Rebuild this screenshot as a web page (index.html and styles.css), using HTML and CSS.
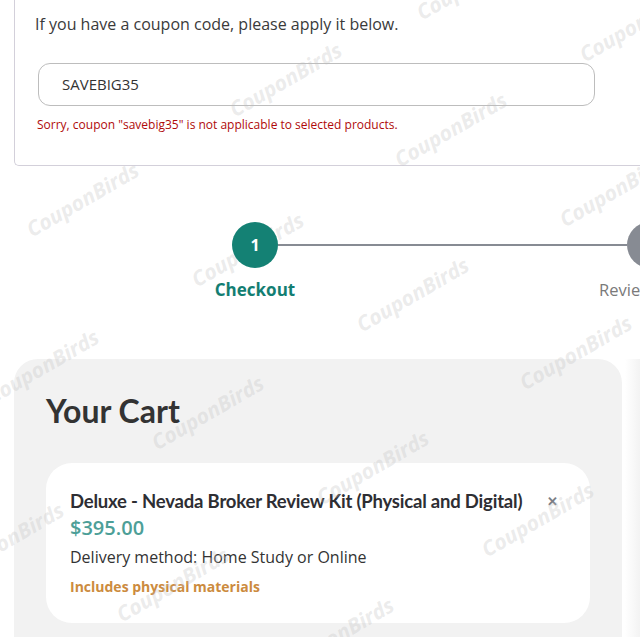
FILE: index.html
```html
<!DOCTYPE html>
<html lang="en">
<head>
<meta charset="utf-8">
<title>Checkout</title>
<link rel="stylesheet" href="styles.css">
</head>
<body>
<div class="page">
  <section class="coupon-card">
    <p class="coupon-intro">If you have a coupon code, please apply it below.</p>
    <div class="coupon-input">SAVEBIG35</div>
    <p class="coupon-error">Sorry, coupon "savebig35" is not applicable to selected products.</p>
  </section>

  <div class="stepper">
    <div class="step step-active">
      <div class="step-circle">1</div>
      <div class="step-label">Checkout</div>
    </div>
    <div class="step-line"></div>
    <div class="step step-next">
      <div class="step-circle">2</div>
      <div class="step-label">Review</div>
    </div>
  </div>

  <div class="cart-row">
    <section class="cart-panel">
      <h2 class="cart-title">Your Cart</h2>
      <div class="cart-item">
        <div class="item-head">
          <h3 class="item-name">Deluxe - Nevada Broker Review Kit (Physical and Digital)</h3>
          <span class="item-remove">&#x2715;</span>
        </div>
        <div class="item-price">$395.00</div>
        <div class="item-delivery">Delivery method: Home Study or Online</div>
        <div class="item-note">Includes physical materials</div>
      </div>
    </section>
    <div class="side-shadow"></div>
  </div>
</div>

<div class="watermarks" aria-hidden="true">
  <span class="wm" style="left:425px;top:-2px">CouponBirds</span>
  <span class="wm" style="left:238px;top:95px">CouponBirds</span>
  <span class="wm" style="left:403px;top:145px">CouponBirds</span>
  <span class="wm" style="left:588px;top:40px">CouponBirds</span>
  <span class="wm" style="left:35px;top:215px">CouponBirds</span>
  <span class="wm" style="left:200px;top:265px">CouponBirds</span>
  <span class="wm" style="left:365px;top:310px">CouponBirds</span>
  <span class="wm" style="left:568px;top:205px">CouponBirds</span>
  <span class="wm" style="left:-5px;top:382px">CouponBirds</span>
  <span class="wm" style="left:160px;top:428px">CouponBirds</span>
  <span class="wm" style="left:325px;top:483px">CouponBirds</span>
  <span class="wm" style="left:528px;top:368px">CouponBirds</span>
  <span class="wm" style="left:-40px;top:555px">CouponBirds</span>
  <span class="wm" style="left:125px;top:600px">CouponBirds</span>
  <span class="wm" style="left:490px;top:535px">CouponBirds</span>
  <span class="wm" style="left:290px;top:650px">CouponBirds</span>
</div>
</body>
</html>
```

FILE: styles.css
```css
html, body {
  margin: 0;
  padding: 0;
  background: #ffffff;
  overflow: hidden;
}

body {
  width: 640px;
  height: 637px;
  position: relative;
  font-family: "Open Sans", "Noto Sans", sans-serif;
  color: #333333;
}

.page {
  width: 640px;
}

p { margin: 0; }

/* Coupon card */
.coupon-card {
  margin-left: 14px;
  width: 700px;
  border: 1px solid #d3d0da;
  border-top: none;
  border-right: none;
  border-radius: 0 0 0 5px;
  padding: 12px 0 32px 20px;
  box-sizing: border-box;
}

.coupon-intro {
  font-size: 16px;
  line-height: 24px;
  color: #3a3a3a;
}

.coupon-input {
  margin: 27px 0 0 3px;
  width: 557px;
  height: 43px;
  box-sizing: border-box;
  border: 1px solid #bdbdbd;
  border-radius: 12px;
  padding-left: 23px;
  font-size: 15px;
  line-height: 41px;
  color: #333333;
}

.coupon-error {
  margin: 11px 0 0 2px;
  font-size: 12px;
  line-height: 16px;
  color: #b00a0a;
}

/* Stepper */
.stepper {
  display: flex;
  align-items: flex-start;
  margin-top: 56px;
  padding-left: 190px;
  width: 900px;
}

.step {
  width: 130px;
  flex-shrink: 0;
  display: flex;
  flex-direction: column;
  align-items: center;
}

.step-circle {
  width: 46px;
  height: 46px;
  border-radius: 50%;
  display: flex;
  align-items: center;
  justify-content: center;
  color: #ffffff;
  font-weight: 700;
  font-size: 16px;
  position: relative;
  z-index: 1;
}

.step-active .step-circle { background: #148174; }
.step-next .step-circle { background: #878b93; }

.step-label {
  margin-top: 11px;
  font-size: 17px;
  line-height: 22px;
}

.step-active .step-label {
  color: #137e72;
  font-weight: 700;
}

.step-next .step-label {
  color: #7a7a7a;
  font-size: 16.5px;
  padding-right: 48px;
}

.step-line {
  width: 349px;
  flex-shrink: 0;
  height: 2px;
  margin: 22px -42px 0;
  background: #878b93;
}

/* Cart */
.cart-row {
  display: flex;
  margin-top: 58px;
}

.cart-panel {
  margin-left: 14px;
  width: 608px;
  flex-shrink: 0;
  background: #f2f2f2;
  border-radius: 24px 24px 0 0;
  padding: 34px 32px 30px;
  box-sizing: border-box;
}

.side-shadow {
  margin-left: 3px;
  width: 20px;
  background: linear-gradient(to right, #ffffff, #f3f3f3);
}

.cart-title {
  margin: 0;
  font-family: "Lato", "Open Sans", sans-serif;
  font-weight: 700;
  font-size: 32px;
  line-height: 36px;
  color: #333333;
  letter-spacing: 0;
}

.cart-item {
  margin-top: 34px;
  background: #ffffff;
  border-radius: 26px;
  padding: 26px 24px 26px;
}

.item-head {
  display: flex;
  align-items: flex-start;
  justify-content: space-between;
}

.item-name {
  margin: 0;
  font-family: "Lato", "Open Sans", sans-serif;
  font-weight: 700;
  font-size: 18.5px;
  line-height: 24px;
  color: #2e2e33;
  letter-spacing: -0.2px;
}

.item-remove {
  margin-right: 8px;
  font-size: 13px;
  line-height: 24px;
  font-weight: 700;
  color: #7a7d85;
}

.item-price {
  margin-top: 1px;
  font-size: 20px;
  line-height: 28px;
  font-weight: 600;
  color: #4d9f98;
}

.item-delivery {
  margin-top: 3px;
  font-size: 16px;
  line-height: 24px;
  color: #333333;
}

.item-note {
  margin-top: 8px;
  font-size: 14px;
  line-height: 20px;
  font-weight: 700;
  color: #cc8b3e;
}

/* Watermark overlay */
.watermarks {
  position: absolute;
  inset: 0;
  pointer-events: none;
  overflow: hidden;
}

.wm {
  position: absolute;
  font-family: "Open Sans", sans-serif;
  font-weight: 700;
  font-style: italic;
  font-size: 21px;
  color: rgba(190, 190, 190, 0.3);
  transform: rotate(-30deg);
  transform-origin: left bottom;
  white-space: nowrap;
}
```
